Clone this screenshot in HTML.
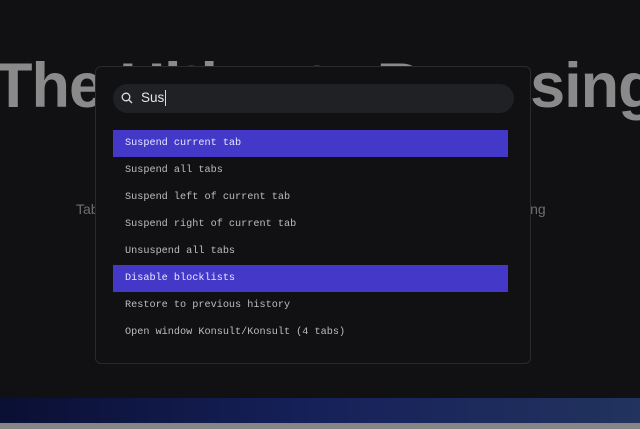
<!DOCTYPE html>
<html><head><style>
*{margin:0;padding:0;box-sizing:border-box}
body{width:640px;height:429px;background:#111113;position:relative;overflow:hidden;font-family:"Liberation Sans",sans-serif}
.title{position:absolute;left:-6px;top:50px;font-size:63px;font-weight:bold;color:#8a8a8a;white-space:nowrap;letter-spacing:-1px}
.sub{position:absolute;top:201px;font-size:14px;color:#6e6e6e}
.modal{position:absolute;left:95px;top:66px;width:436px;height:298px;background:#111113;border:1px solid #2a2a2d;border-radius:6px}
.search{position:absolute;left:17px;top:17px;width:401px;height:29px;background:#202124;border-radius:15px}
.search svg{position:absolute;left:8px;top:8px}
.search span{position:absolute;left:28px;top:6px;font-size:13.5px;color:#e6e6e6;border-right:1px solid #ddd;padding-right:1px;line-height:16px}
.item{position:absolute;left:17px;width:395px;height:27px;font-family:"Liberation Mono",monospace;font-size:10.2px;color:#bdbdbd;padding-left:12px;line-height:28px}
.on{background:#4338c8;color:#e8e8ff}
.band{position:absolute;left:0;top:398px;width:640px;height:25px;background:linear-gradient(90deg,#0a0f33,#16215a 50%,#22335e)}
.gray{position:absolute;left:0;top:423px;width:640px;height:6px;background:#858585}
</style></head><body>
<div class="title">The Ultimate Browsing</div>
<div class="sub" style="left:76px">Tab</div>
<div class="sub" style="left:527px">ing</div>
<div class="modal">
 <div class="search"><svg width="12" height="12" viewBox="0 0 12 12"><circle cx="5" cy="5" r="3.8" fill="none" stroke="#ddd" stroke-width="1.3"/><path d="M8 8L11 11" stroke="#ddd" stroke-width="1.3"/></svg><span>Sus</span></div>
 <div class="item on" style="top:63px">Suspend current tab</div>
 <div class="item" style="top:90px">Suspend all tabs</div>
 <div class="item" style="top:117px">Suspend left of current tab</div>
 <div class="item" style="top:144px">Suspend right of current tab</div>
 <div class="item" style="top:171px">Unsuspend all tabs</div>
 <div class="item on" style="top:198px">Disable blocklists</div>
 <div class="item" style="top:225px">Restore to previous history</div>
 <div class="item" style="top:252px">Open window Konsult/Konsult (4 tabs)</div>
</div>
<div class="band"></div><div class="gray"></div>
</body></html>
